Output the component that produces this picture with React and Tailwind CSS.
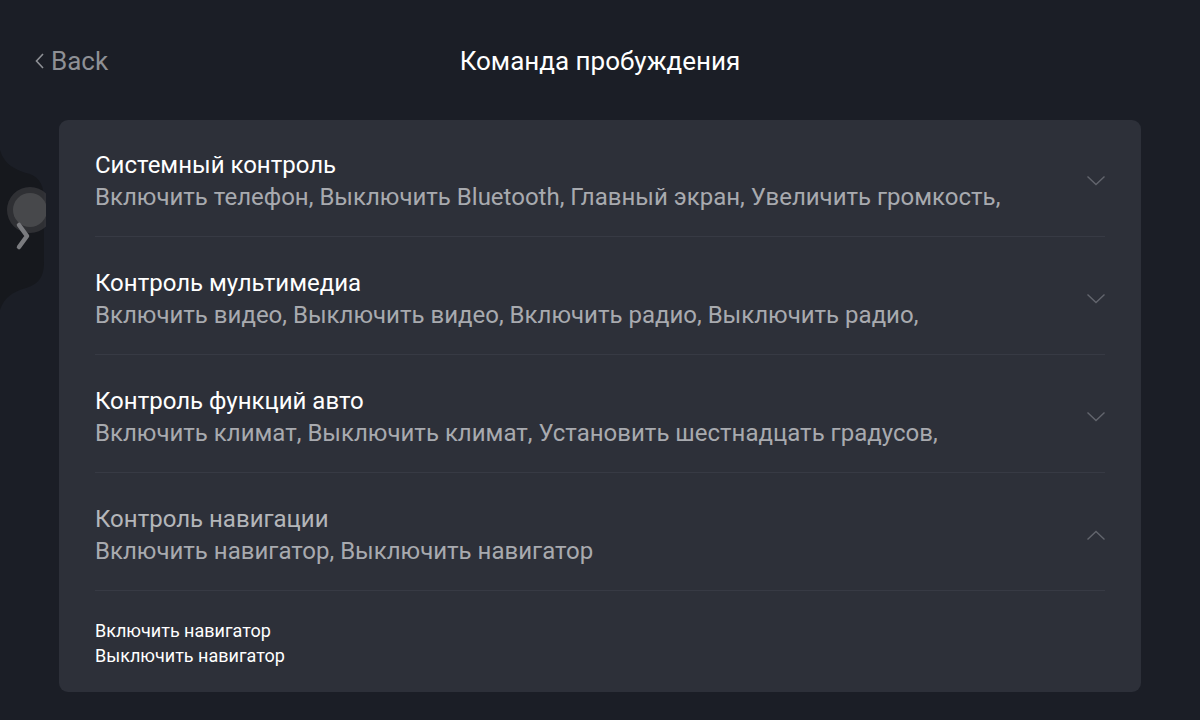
const groups = [
  {
    title: "Системный контроль",
    desc: "Включить телефон, Выключить Bluetooth, Главный экран, Увеличить громкость,",
  },
  {
    title: "Контроль мультимедиа",
    desc: "Включить видео, Выключить видео, Включить радио, Выключить радио,",
  },
  {
    title: "Контроль функций авто",
    desc: "Включить климат, Выключить климат, Установить шестнадцать градусов,",
  },
  {
    title: "Контроль навигации",
    desc: "Включить навигатор, Выключить навигатор",
    open: true,
    items: ["Включить навигатор", "Выключить навигатор"],
  },
];

function Chevron({ up }) {
  return (
    <svg width="20" height="12" viewBox="0 0 20 12" fill="none">
      <path
        d={up ? "M1.5 10.5 L10 2.5 L18.5 10.5" : "M1.5 1.5 L10 9.5 L18.5 1.5"}
        stroke="#62656d"
        strokeWidth="1.4"
      />
    </svg>
  );
}

export default function App() {
  return (
    <div
      className="relative h-[720px] w-[1200px] overflow-hidden bg-[#1b1e26] text-white"
      style={{ fontFamily: "Roboto, 'Noto Sans', sans-serif" }}
    >
      {/* side handle */}
      <div className="absolute left-0 top-[150px] h-[160px] w-[46px]">
        <svg width="46" height="160" viewBox="0 0 46 160">
          <path
            d="M0 0 C4 14 14 20 30 24 C40 28 44 36 44 50 L44 112 C44 128 38 134 26 138 C12 142 4 148 0 160 Z"
            fill="#16181d"
          />
          <circle cx="30" cy="60" r="23" fill="#3a3b3f" opacity="0.7" />
          <circle cx="30" cy="60" r="17" fill="#47484b" />
          <path
            d="M19 75 L27 86 L19 97"
            stroke="#7a7b7f"
            strokeWidth="4.5"
            strokeLinecap="round"
            strokeLinejoin="round"
            fill="none"
          />
        </svg>
      </div>

      {/* header */}
      <div className="relative flex h-[120px] items-start justify-center pt-[44px]">
        <div className="absolute left-[34px] top-[45px] flex items-center gap-[5px] text-[#8e9095]">
          <svg width="12" height="18" viewBox="0 0 12 18" fill="none">
            <path d="M9 2 L2.5 9 L9 16" stroke="#8e9095" strokeWidth="1.6" />
          </svg>
          <span className="text-[26px] leading-[32px]">Back</span>
        </div>
        <h1 className="text-[26px] leading-[34px] font-normal">Команда пробуждения</h1>
      </div>

      {/* card */}
      <div className="mx-[59px] h-[572px] rounded-[9px] bg-[#2d3039] px-[36px]">
        {groups.map((g, i) => (
          <div key={g.title}>
            <div
              className={`flex items-center justify-between border-b border-[#373a44] pb-[24px] ${
                i === 0 ? "pt-[30px]" : "pt-[31px]"
              }`}
            >
              <div className="flex flex-col gap-[2px]">
                <div
                  className={`text-[24px] leading-[30px] ${
                    g.open ? "text-[#b4b6ba]" : "text-white"
                  }`}
                >
                  {g.title}
                </div>
                <div className="text-[24px] leading-[30px] text-[#a8aaaf]">{g.desc}</div>
              </div>
              <div className="mr-[-1px]">
                <Chevron up={g.open} />
              </div>
            </div>
            {g.open && (
              <div className="pt-[27px] text-[18px] leading-[25px] text-white">
                {g.items.map((it) => (
                  <div key={it}>{it}</div>
                ))}
              </div>
            )}
          </div>
        ))}
      </div>
    </div>
  );
}
